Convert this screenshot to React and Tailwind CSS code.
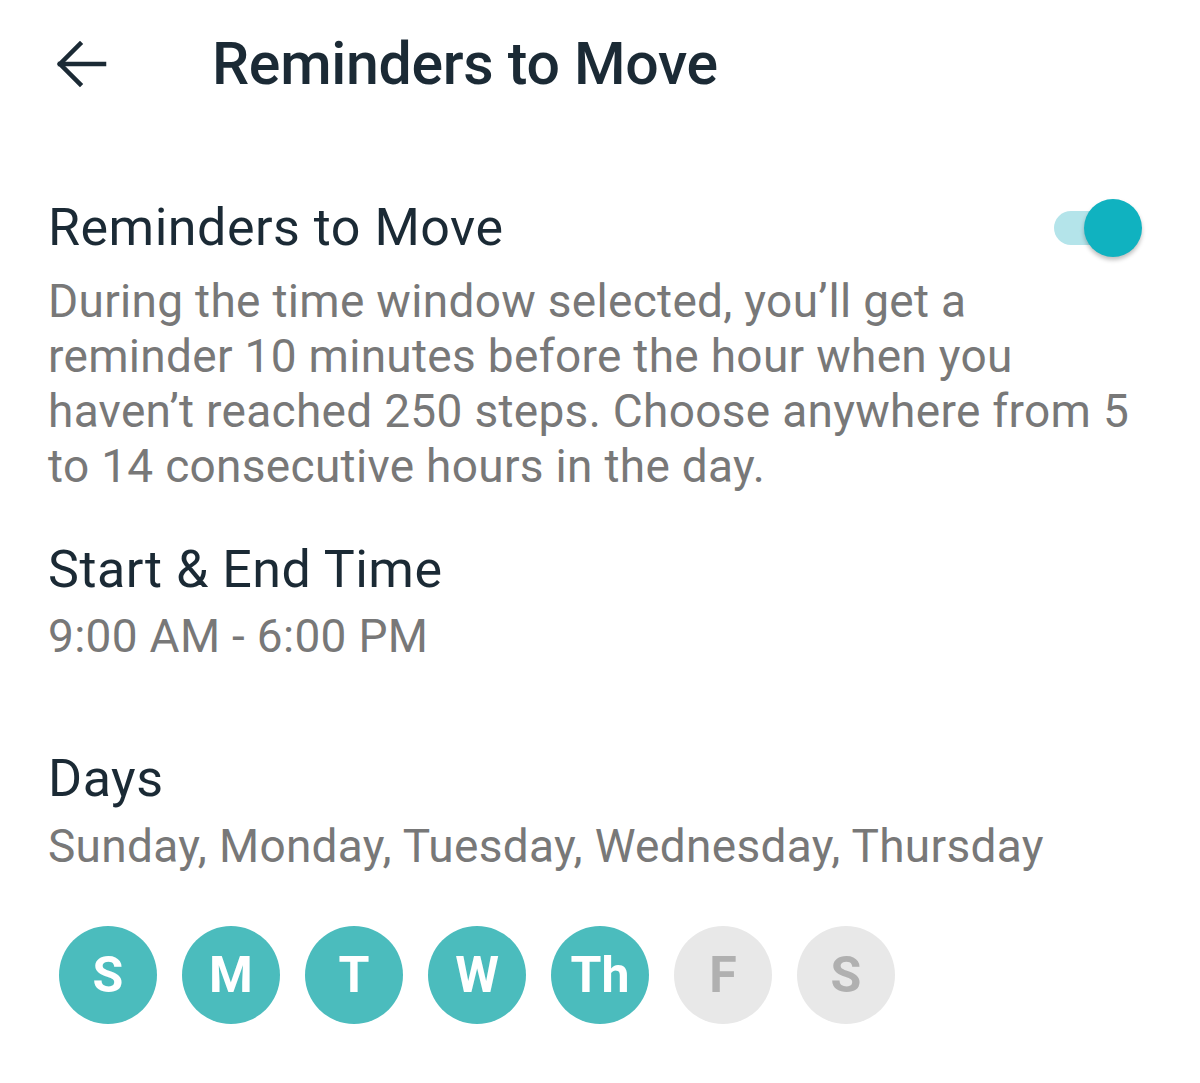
import React from 'react';

const days = [
  { l: 'S', on: true },
  { l: 'M', on: true },
  { l: 'T', on: true },
  { l: 'W', on: true },
  { l: 'Th', on: true },
  { l: 'F', on: false },
  { l: 'S', on: false },
];

export default function App() {
  return (
    <div className="w-[1200px] h-[1083px] bg-white text-[#1b2a35] font-['Roboto',sans-serif] overflow-hidden">
      <header className="flex items-center h-[128px] pl-[56px]">
        <svg width="52" height="48" viewBox="0 0 52 48" fill="none" stroke="#1b2a35" strokeWidth="4.5" strokeLinecap="square">
          <path d="M4 24h44" />
          <path d="M24 4L4 24l20 20" />
        </svg>
        <h1 className="ml-[104px] text-[59px] font-medium tracking-[-0.3px]">Reminders to Move</h1>
      </header>

      <section className="px-[48px] pt-[68px]">
        <div className="flex items-center justify-between">
          <h2 className="text-[52px] leading-[64px] tracking-[0.5px]">Reminders to Move</h2>
          <div className="relative w-[96px] h-[64px] flex items-center mr-[10px]">
            <div className="ml-[8px] w-[66px] h-[34px] rounded-full bg-[#b4e4ea]" />
            <div className="absolute right-0 top-[3px] w-[58px] h-[58px] rounded-full bg-[#10b2c0] shadow-[0_3px_4px_rgba(0,0,0,0.25)]" />
          </div>
        </div>
        <p className="mt-[14px] text-[46px] leading-[55px] tracking-[0.3px] text-[#787878] w-[1092px]">
          During the time window selected, you’ll get a reminder 10 minutes before the hour when you haven’t reached 250 steps. Choose anywhere from 5 to 14 consecutive hours in the day.
        </p>

        <h2 className="mt-[44px] text-[52px] leading-[64px] tracking-[0.5px]">Start &amp; End Time</h2>
        <p className="mt-[7px] text-[46px] leading-[55px] tracking-[0.3px] text-[#787878]">9:00 AM - 6:00 PM</p>

        <h2 className="mt-[83px] text-[52px] leading-[64px] tracking-[0.5px]">Days</h2>
        <p className="mt-[8px] text-[46px] leading-[55px] tracking-[0.3px] text-[#787878]">Sunday, Monday, Tuesday, Wednesday, Thursday</p>

        <div className="mt-[52px] ml-[11px] flex gap-[25px]">
          {days.map((d, i) => (
            <div
              key={i}
              className={
                'w-[98px] h-[98px] rounded-full flex items-center justify-center text-[50px] font-bold ' +
                (d.on ? 'bg-[#4bbcbd] text-white' : 'bg-[#e8e8e8] text-[#b0b0b0]')
              }
            >
              {d.l}
            </div>
          ))}
        </div>
      </section>
    </div>
  );
}
